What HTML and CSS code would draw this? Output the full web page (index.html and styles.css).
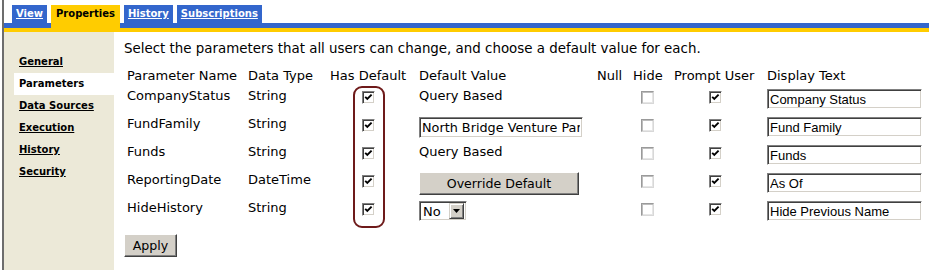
FILE: index.html
```html
<!DOCTYPE html>
<html lang="en">
<head>
<meta charset="utf-8">
<title>Properties - Parameters</title>
<link rel="stylesheet" href="styles.css">
</head>
<body>
<div class="page">
  <div class="tabbar">
    <a class="tab" href="#">View</a>
    <span class="tab active">Properties</span>
    <a class="tab" href="#">History</a>
    <a class="tab" href="#">Subscriptions</a>
  </div>
  <div class="band"></div>
  <div class="body">
    <nav class="side">
      <a class="item" href="#">General</a>
      <span class="item current">Parameters</span>
      <a class="item" href="#">Data Sources</a>
      <a class="item" href="#">Execution</a>
      <a class="item" href="#">History</a>
      <a class="item" href="#">Security</a>
    </nav>
    <main class="main">
      <p class="intro">Select the parameters that all users can change, and choose a default value for each.</p>
      <div class="grid-wrap">
        <table class="params">
          <colgroup>
            <col class="w-name"><col class="w-type"><col class="w-hasdef"><col class="w-defval">
            <col class="w-null"><col class="w-hide"><col class="w-prompt"><col class="w-disp">
          </colgroup>
          <thead>
            <tr class="head">
              <th>Parameter Name</th><th>Data Type</th><th>Has Default</th><th>Default Value</th>
              <th>Null</th><th>Hide</th><th>Prompt User</th><th>Display Text</th>
            </tr>
          </thead>
          <tbody>
            <tr>
              <td class="t">CompanyStatus</td><td class="t">String</td>
              <td class="c hasdef"><span class="cb on"><svg viewBox="0 0 11 11" width="11" height="11"><path d="M2.2 4.8 L4.3 6.9 L8.6 2.6"/></svg></span></td>
              <td class="t">Query Based</td>
              <td></td>
              <td class="c hide"><span class="cb off"></span></td>
              <td class="c prompt"><span class="cb on"><svg viewBox="0 0 11 11" width="11" height="11"><path d="M2.2 4.8 L4.3 6.9 L8.6 2.6"/></svg></span></td>
              <td><input class="disp" type="text" value="Company Status"></td>
            </tr>
            <tr>
              <td class="t">FundFamily</td><td class="t">String</td>
              <td class="c hasdef"><span class="cb on"><svg viewBox="0 0 11 11" width="11" height="11"><path d="M2.2 4.8 L4.3 6.9 L8.6 2.6"/></svg></span></td>
              <td><input class="defval" type="text" value="North Bridge Venture Partners"></td>
              <td></td>
              <td class="c hide"><span class="cb off"></span></td>
              <td class="c prompt"><span class="cb on"><svg viewBox="0 0 11 11" width="11" height="11"><path d="M2.2 4.8 L4.3 6.9 L8.6 2.6"/></svg></span></td>
              <td><input class="disp" type="text" value="Fund Family"></td>
            </tr>
            <tr>
              <td class="t">Funds</td><td class="t">String</td>
              <td class="c hasdef"><span class="cb on"><svg viewBox="0 0 11 11" width="11" height="11"><path d="M2.2 4.8 L4.3 6.9 L8.6 2.6"/></svg></span></td>
              <td class="t">Query Based</td>
              <td></td>
              <td class="c hide"><span class="cb off"></span></td>
              <td class="c prompt"><span class="cb on"><svg viewBox="0 0 11 11" width="11" height="11"><path d="M2.2 4.8 L4.3 6.9 L8.6 2.6"/></svg></span></td>
              <td><input class="disp" type="text" value="Funds"></td>
            </tr>
            <tr>
              <td class="t">ReportingDate</td><td class="t">DateTime</td>
              <td class="c hasdef"><span class="cb on"><svg viewBox="0 0 11 11" width="11" height="11"><path d="M2.2 4.8 L4.3 6.9 L8.6 2.6"/></svg></span></td>
              <td><button class="btn override" type="button">Override Default</button></td>
              <td></td>
              <td class="c hide"><span class="cb off"></span></td>
              <td class="c prompt"><span class="cb on"><svg viewBox="0 0 11 11" width="11" height="11"><path d="M2.2 4.8 L4.3 6.9 L8.6 2.6"/></svg></span></td>
              <td><input class="disp" type="text" value="As Of"></td>
            </tr>
            <tr>
              <td class="t">HideHistory</td><td class="t">String</td>
              <td class="c hasdef"><span class="cb on"><svg viewBox="0 0 11 11" width="11" height="11"><path d="M2.2 4.8 L4.3 6.9 L8.6 2.6"/></svg></span></td>
              <td><span class="select"><span class="select-val">No</span><span class="select-btn"><svg viewBox="0 0 7 4" width="7" height="4"><path d="M0 0 H7 L3.5 4 Z"/></svg></span></span></td>
              <td></td>
              <td class="c hide"><span class="cb off"></span></td>
              <td class="c prompt"><span class="cb on"><svg viewBox="0 0 11 11" width="11" height="11"><path d="M2.2 4.8 L4.3 6.9 L8.6 2.6"/></svg></span></td>
              <td><input class="disp" type="text" value="Hide Previous Name"></td>
            </tr>
          </tbody>
        </table>
        <div class="highlight"></div>
      </div>
      <button class="btn apply" type="button">Apply</button>
    </main>
  </div>
</div>
</body>
</html>
```
FILE: styles.css
```css
html, body {
  margin: 0;
  background: #fff;
}
body {
  font-family: "DejaVu Sans", Verdana, sans-serif;
  font-size: 13px;
  color: #000;
}
.page {
  margin-left: 2px;
  border-left: 2px solid #6d6d6d;
  height: 270px;
  display: flex;
  flex-direction: column;
  overflow: hidden;
}
.tabbar {
  display: flex;
  align-items: flex-start;
  gap: 4px;
  height: 28px;
  box-sizing: border-box;
  padding: 5px 0 0 8px;
  background: linear-gradient(#fff 23px, #3366cc 23px);
}
.tab {
  height: 18px;
  line-height: 18px;
  padding: 0 4px;
  background: #3366cc;
  color: #fff;
  font-weight: bold;
  font-size: 10px;
  text-decoration: underline;
}
.tab.active {
  height: 23px;
  padding: 0 5px;
  background: #ffcc00;
  color: #000;
  text-decoration: none;
}
.band {
  height: 4px;
  background: #ffcc00;
}
.body {
  flex: 1;
  display: flex;
}
.side {
  width: 110px;
  flex: none;
  box-sizing: border-box;
  background: #ece9d8;
  padding: 19px 0 0 10px;
  display: flex;
  flex-direction: column;
}
.item {
  height: 22px;
  line-height: 22px;
  padding-left: 5px;
  font-weight: bold;
  font-size: 10px;
  color: #000;
  text-decoration: underline;
}
.item.current {
  background: #fff;
  text-decoration: none;
}
.main {
  flex: 1;
  padding: 8px 0 0 10px;
}
.intro {
  margin: 0;
  height: 17px;
  line-height: 17px;
  font-size: 13.4px;
  white-space: nowrap;
}
.grid-wrap {
  position: relative;
  width: 800px;
  margin-top: 8px;
}
.params {
  table-layout: fixed;
  border-collapse: collapse;
  width: 800px;
}
.w-name { width: 121px; }
.w-type { width: 82px; }
.w-hasdef { width: 89px; }
.w-defval { width: 178px; }
.w-null { width: 36px; }
.w-hide { width: 41px; }
.w-prompt { width: 93px; }
.w-disp { width: 160px; }
.params th {
  font-weight: normal;
  text-align: left;
  padding: 0 3px;
  white-space: nowrap;
}
.params tr.head { height: 20px; }
.params tbody tr { height: 28px; }
.params td {
  padding: 0 3px;
  white-space: nowrap;
  vertical-align: middle;
  overflow: hidden;
}
.params td.t { padding-bottom: 7px; }
.params td.c { padding-bottom: 4px; line-height: 13px; }
.params td.hasdef { padding-left: 35px; }
.params td.hide { padding-left: 11px; }
.params td.prompt { padding-left: 38px; }
.cb {
  display: inline-block;
  vertical-align: middle;
  width: 13px;
  height: 13px;
  box-sizing: border-box;
  border: 1px solid;
  border-color: #808080 #fff #fff #808080;
  box-shadow: inset 1px 1px #404040, inset -1px -1px #d4d0c8;
  background: #fff;
}
.cb svg {
  display: block;
}
.cb svg path {
  fill: none;
  stroke: #000;
  stroke-width: 1.9;
}
.cb.off {
  border-color: #9a9a9a #d8d8d8 #d8d8d8 #9a9a9a;
  box-shadow: inset 1px 1px #bdbdbd, inset -1px -1px #e6e6e6;
  background: #fff;
}
input.disp, input.defval, .select {
  box-sizing: border-box;
  border: 1px solid;
  border-color: #808080 #fff #fff #808080;
  box-shadow: inset 1px 1px #404040, inset -1px -1px #d4d0c8;
  background: #fff;
  color: #000;
  margin: 0;
  outline: none;
}
input.disp {
  display: block;
  width: 155px;
  height: 20px;
  padding: 0 2px;
  font-family: "Liberation Sans", Arial, sans-serif;
  font-size: 13px;
}
input.defval {
  display: block;
  width: 164px;
  height: 21px;
  padding: 0 2px;
  font-family: "DejaVu Sans", Verdana, sans-serif;
  font-size: 12.8px;
}
.select {
  display: flex;
  align-items: center;
  width: 48px;
  height: 20px;
  padding: 2px;
}
.select-val {
  flex: 1;
  padding-left: 1px;
}
.select-btn {
  width: 15px;
  height: 16px;
  box-sizing: border-box;
  background: #d4d0c8;
  border: 1px solid;
  border-color: #d4d0c8 #404040 #404040 #d4d0c8;
  box-shadow: inset 1px 1px #fff, inset -1px -1px #808080;
  display: flex;
  align-items: center;
  justify-content: center;
}
.select-btn svg path { fill: #000; }
.btn {
  font-family: "DejaVu Sans", Verdana, sans-serif;
  font-size: 12.6px;
  color: #000;
  background: #d4d0c8;
  border: 1px solid;
  border-color: #fff #404040 #404040 #fff;
  box-shadow: inset -1px -1px #808080;
  padding: 0;
  margin: 0;
  height: 23px;
  box-sizing: border-box;
}
.btn.override {
  display: block;
  width: 160px;
}
.btn.apply {
  display: block;
  width: 53px;
  margin-top: 9px;
}
.highlight {
  position: absolute;
  left: 229px;
  top: 21px;
  width: 32px;
  height: 142px;
  box-sizing: border-box;
  border: 2px solid #6e1a1a;
  border-radius: 9px;
  pointer-events: none;
}
```
